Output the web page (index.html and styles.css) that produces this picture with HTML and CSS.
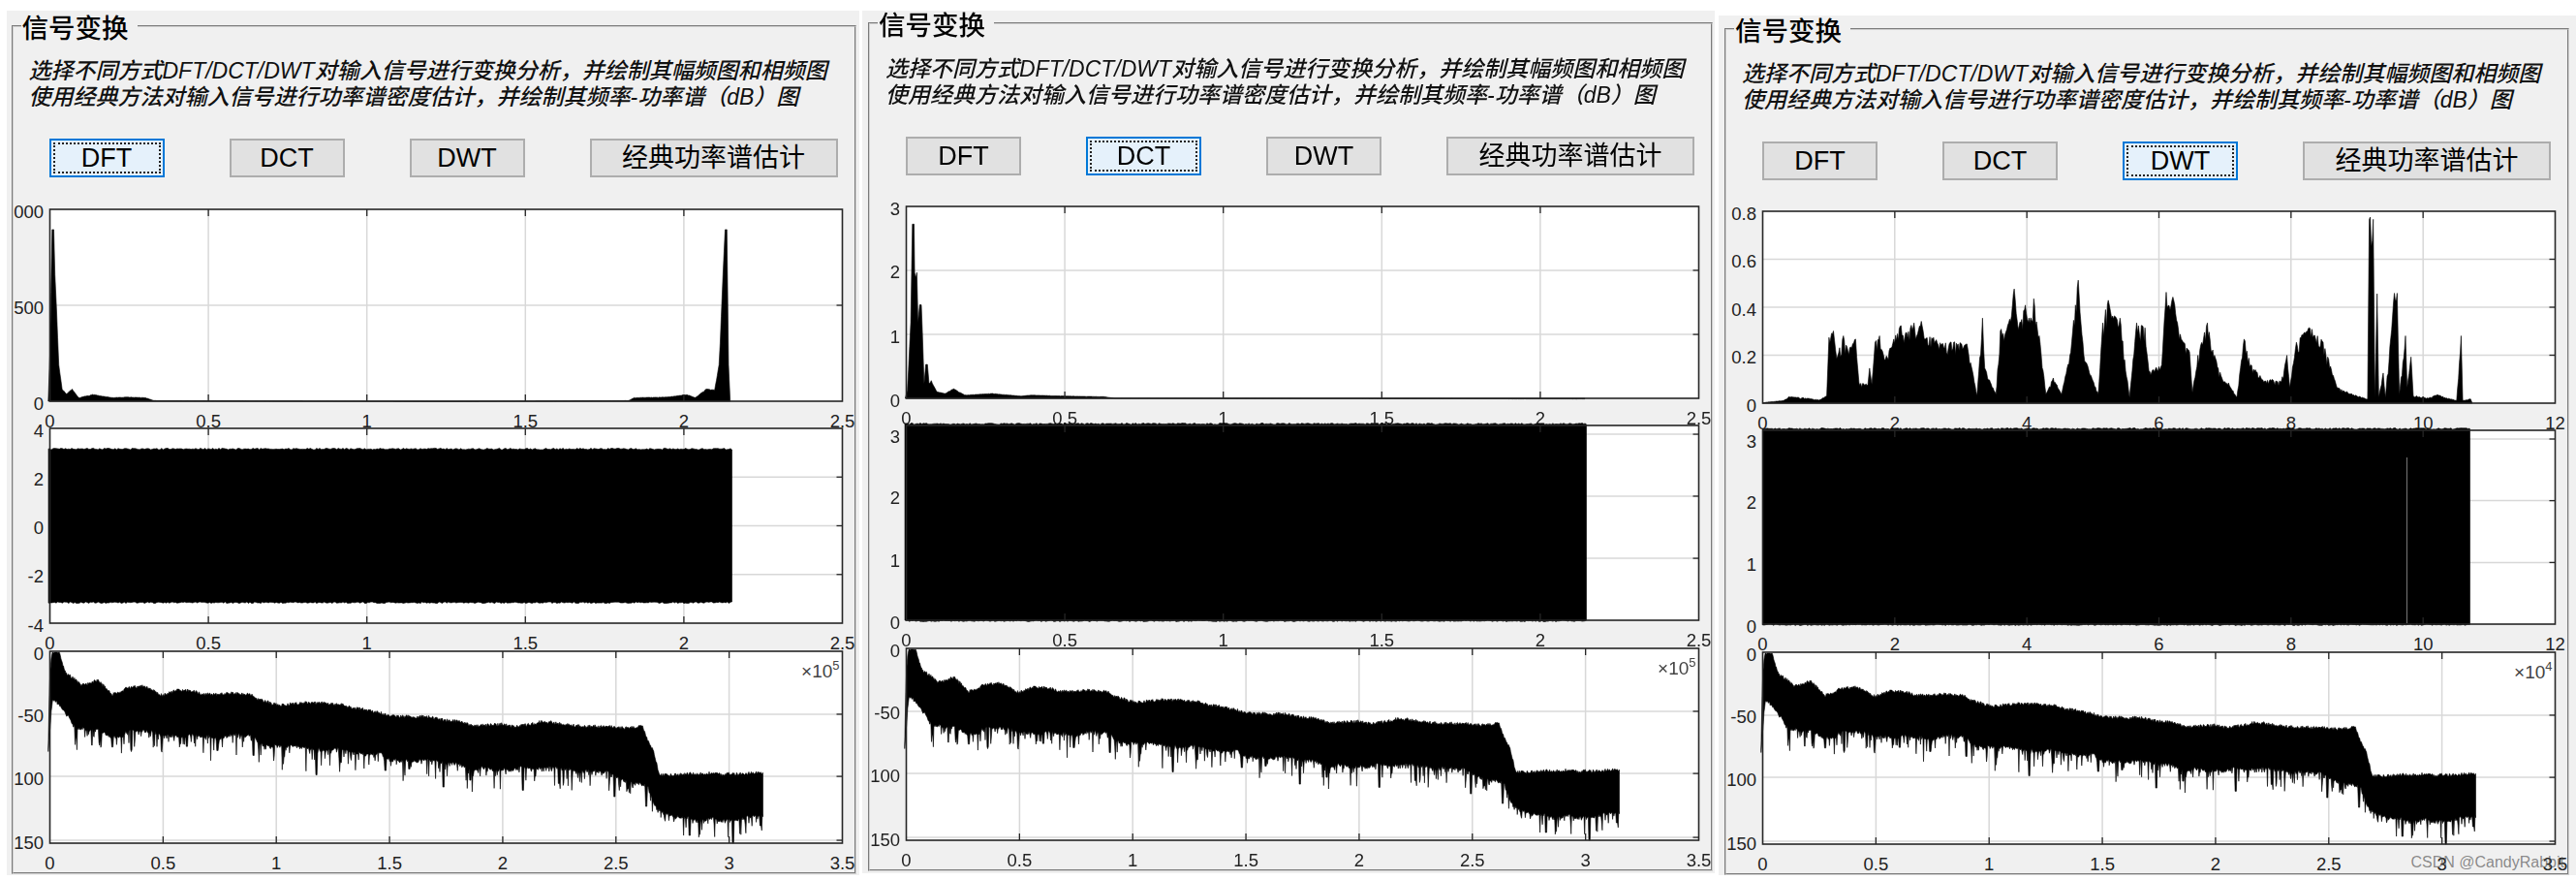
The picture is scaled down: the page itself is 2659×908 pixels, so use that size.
FILE: index.html
```html
<!DOCTYPE html>
<html lang="zh-CN">
<head>
<meta charset="utf-8">
<title>信号变换</title>
<link rel="stylesheet" href="styles.css">
</head>
<body>
<main class="sheet">
  <section class="panel panel-dft">
    <fieldset class="group">
      <legend class="group-title">信号变换</legend>
      <p class="intro">选择不同方式DFT/DCT/DWT对输入信号进行变换分析，并绘制其幅频图和相频图<br>使用经典方法对输入信号进行功率谱密度估计，并绘制其频率-功率谱（dB）图</p>
      <div class="actions">
        <button class="btn is-focus">DFT</button>
        <button class="btn">DCT</button>
        <button class="btn">DWT</button>
        <button class="btn btn-wide">经典功率谱估计</button>
      </div>
      <div class="plots" data-set="dft"></div>
    </fieldset>
  </section>
  <section class="panel panel-dct">
    <fieldset class="group">
      <legend class="group-title">信号变换</legend>
      <p class="intro">选择不同方式DFT/DCT/DWT对输入信号进行变换分析，并绘制其幅频图和相频图<br>使用经典方法对输入信号进行功率谱密度估计，并绘制其频率-功率谱（dB）图</p>
      <div class="actions">
        <button class="btn">DFT</button>
        <button class="btn is-focus">DCT</button>
        <button class="btn">DWT</button>
        <button class="btn btn-wide">经典功率谱估计</button>
      </div>
      <div class="plots" data-set="dct"></div>
    </fieldset>
  </section>
  <section class="panel panel-dwt">
    <fieldset class="group">
      <legend class="group-title">信号变换</legend>
      <p class="intro">选择不同方式DFT/DCT/DWT对输入信号进行变换分析，并绘制其幅频图和相频图<br>使用经典方法对输入信号进行功率谱密度估计，并绘制其频率-功率谱（dB）图</p>
      <div class="actions">
        <button class="btn">DFT</button>
        <button class="btn">DCT</button>
        <button class="btn is-focus">DWT</button>
        <button class="btn btn-wide">经典功率谱估计</button>
      </div>
      <div class="plots" data-set="dwt"></div>
    </fieldset>
    <span class="watermark">CSDN @CandyRabbit</span>
  </section>
</main>
<script src="script.js"></script>
</body>
</html>
```
FILE: styles.css
```css
* { box-sizing: border-box; }
html, body { margin: 0; padding: 0; background: #fff; }
body {
  width: 2659px;
  height: 908px;
  overflow: hidden;
  font-family: "Liberation Sans", "Noto Sans CJK SC", sans-serif;
  color: #111;
}
.sheet {
  display: flex;
  align-items: flex-start;
  padding-left: 7px;
  gap: 3px;
  filter: blur(0.4px);
}

.panel {
  position: relative;
  display: flex;
  flex-direction: column;
  width: 880px;
  padding-bottom: 3px;
  background: #f0f0f0;
}
.panel-dft { margin-top: 11px; height: 892px; padding-left: 4.5px; }
.panel-dct { margin-top: 11px; height: 890px; padding-left: 6px; }
.panel-dwt { margin-top: 16px; height: 887px; width: 885px; padding-left: 6px; margin-left: 1px; }

.group {
  flex: 1;
  width: 872px;
  min-width: 0;
  margin: -3px 0 0;
  padding: 0;
  border: 2px groove #cfcfcf;
}
.panel-dct .group { margin-top: -6px; }
.panel-dwt .group { margin-top: -5px; }

.group-title {
  height: 38px;
  margin-left: 8px;
  padding: 6px 9px 0 1px;
  font-size: 27.5px;
  font-weight: 500;
  line-height: 32px;
  color: #000;
}

.intro {
  margin: 13.5px 0 0 16px;
  font-size: 23px;
  font-weight: 500;
  line-height: 27px;
  font-style: italic;
  white-space: nowrap;
  color: #111;
}
.panel-dct .intro { margin-top: 14.5px; }

.actions { display: flex; gap: 67px; margin: 29.5px 0 0 37px; }
.btn {
  width: 119px;
  height: 40px;
  padding: 0;
  background: #e1e1e1;
  border: 2px solid #adadad;
  border-radius: 0;
  font: 400 27px/1 "Liberation Sans", "Noto Sans CJK SC", sans-serif;
  color: #000;
}
.btn-wide { width: 256px; }
.btn.is-focus {
  background: #e5f1fb;
  border-color: #0078d7;
  outline: 2px dotted #222;
  outline-offset: -6px;
}

.plots { margin-top: 32px; }
.panel-dft .plots { margin-top: 33px; }
.plot { display: block; overflow: visible; }
.plot-area { fill: #fff; }
.plot-grid { stroke: #d8d8d8; stroke-width: 1.5; fill: none; }
.plot-frame { stroke: #262626; stroke-width: 1.6; fill: none; }
.plot-tick { stroke: #262626; stroke-width: 1.3; }
.plot-data { fill: #000; stroke: #000; stroke-width: 0.6; }
.plot-seam { stroke: #777; stroke-width: 1; }
.plot-label { font: 18.5px "Liberation Sans", sans-serif; fill: #222; }
.plot-scale { font: 19px "Liberation Sans", sans-serif; fill: #444; }
.plot-exp { font-size: 13px; }

.watermark {
  position: absolute;
  right: 12px;
  bottom: 4px;
  font-size: 16px;
  line-height: 18px;
  color: rgba(70, 70, 70, 0.62);
  white-space: nowrap;
}
```
FILE: script.js
```js
(function () {
  var NS = 'http://www.w3.org/2000/svg';
  var AX_LEFT = 37.5;
  var AX_W = 818;

  function rng(seed) {
    return function () {
      seed |= 0; seed = seed + 0x6D2B79F5 | 0;
      var t = Math.imul(seed ^ seed >>> 15, 1 | seed);
      t = t + Math.imul(t ^ t >>> 7, 61 | t) ^ t;
      return ((t ^ t >>> 14) >>> 0) / 4294967296;
    };
  }
  function el(name, attrs, parent) {
    var n = document.createElementNS(NS, name);
    for (var k in attrs) n.setAttribute(k, attrs[k]);
    if (parent) parent.appendChild(n);
    return n;
  }
  function interp(pts, x) {
    if (x <= pts[0]) return pts[1];
    for (var i = 2; i < pts.length; i += 2) {
      if (x <= pts[i]) {
        var t = (x - pts[i - 2]) / (pts[i] - pts[i - 2] || 1);
        return pts[i - 1] + t * (pts[i + 1] - pts[i - 1]);
      }
    }
    return pts[pts.length - 1];
  }

  /* traced outlines, in reference crop units */
  var DFT = [85,1243,88,1100,92,710,95,710,97,850,100,960,104,1130,110,1205,118,1220,128,1205,140,1232,165,1222,200,1232,228,1230,260,1232,275,1241,800,1244,1130,1241,1140,1232,1200,1230,1235,1222,1250,1232,1270,1205,1285,1208,1293,1130,1297,980,1300,850,1304,710,1307,710,1310,1130,1313,1243];
  var DCT = [93,1235,97,1210,103,1000,106,695,109,695,110,845,114,845,116,1000,119,945,122,945,124,1030,127,1190,130,1130,133,1130,136,1190,140,1180,150,1215,165,1220,180,1205,200,1225,250,1220,300,1228,320,1225,380,1228,450,1230,470,1235,1315,1237];
  var DWT = [103,1248,110,1245,140,1240,150,1228,180,1232,205,1238,218,1225,222,1045,230,1025,236,1110,248,1040,256,1085,270,1050,276,1185,292,1190,295,1140,299,1190,305,1060,313,1040,322,1115,350,1010,360,1030,375,1000,378,1050,388,995,395,1050,410,1045,425,1065,440,1060,470,1065,480,1150,488,1225,498,985,502,1140,522,1220,530,1025,545,1000,555,895,562,1020,575,945,583,1000,590,925,600,1040,612,1220,625,1170,640,1220,655,1100,670,868,680,1100,706,1220,714,1000,724,930,730,985,745,985,762,1230,775,1000,790,1015,797,1150,820,1130,828,905,835,960,840,920,855,1050,870,1090,875,1215,885,1100,902,1000,915,1100,930,1180,940,1185,955,1230,968,1050,980,1130,1005,1180,1015,1175,1035,1180,1045,1100,1050,1200,1062,1060,1085,1015,1110,1060,1135,1200,1170,1225,1190,1235,1193,680,1200,680,1203,1230,1207,910,1210,1230,1218,1155,1222,1230,1238,908,1243,908,1247,1220,1258,1040,1261,1200,1268,1105,1272,1225,1300,1232,1315,1222,1340,1235,1350,1240,1358,1040,1361,1240,1375,1235,1378,1248];
  var PSD_TOP = [85,1000,88,760,92,700,105,700,115,760,130,780,145,800,175,785,200,830,230,810,255,805,290,835,320,815,370,830,395,825,445,825,470,845,500,860,580,855,660,875,700,895,775,900,860,925,900,920,930,930,970,915,1030,925,1155,930,1165,975,1175,1000,1185,1075,1370,1075];
  var PSD_BOT = [85,1000,92,850,105,860,120,895,135,935,165,930,200,960,240,945,280,955,330,960,400,955,450,940,470,975,560,995,680,1005,700,1030,790,1030,850,1055,950,1055,1090,1060,1130,1085,1165,1115,1180,1175,1250,1215,1370,1210];
  var PSD_SPIKES = [[135,965],[200,992],[235,1000],[290,985],[335,990],[390,1003],[455,1018],[510,1022],[568,1078],[612,1040],[692,1065],[735,1060],[797,1116],[845,1095],[940,1126],[1005,1105],[1105,1146],[1128,1122],[1162,1176],[1240,1266],[1258,1262],[1318,1292],[1368,1236]];

  function outline(g, pts, box, w, h, seed, amp) {
    var r = rng(seed), d = '';
    var bx0 = box[0], bx1 = box[1], by0 = box[2], by1 = box[3];
    var toX = function (x) { return (x - bx0) / (bx1 - bx0) * w; };
    var toY = function (y) { return (y - by0) / (by1 - by0) * h; };
    for (var i = 0; i < pts.length; i += 2) {
      d += (i ? 'L' : 'M') + toX(pts[i]).toFixed(1) + ' ' + toY(pts[i + 1]).toFixed(1);
      if (i + 2 < pts.length) {
        var x0 = toX(pts[i]), x1 = toX(pts[i + 2]);
        var n = Math.floor((x1 - x0) / 0.9);
        for (var k = 1; k < n; k++) {
          var t = k / n;
          var yy = toY(pts[i + 1]) + t * (toY(pts[i + 3]) - toY(pts[i + 1]));
          yy += (r() * r()) * amp * (h - yy) * 2.2 - r() * amp * 0.25 * (h - yy);
          d += 'L' + (x0 + t * (x1 - x0)).toFixed(1) + ' ' + yy.toFixed(1);
        }
      }
    }
    el('path', { 'class': 'plot-data', d: d + 'L' + toX(pts[pts.length - 2]).toFixed(1) + ' ' + h + 'L' + toX(pts[0]).toFixed(1) + ' ' + h + 'Z' }, g);
  }

  function band(g, w, h, opts) {
    var r = rng(opts.seed), top = '', bot = [];
    for (var x = opts.x0; x <= opts.x1; x += 1.6) {
      top += (top ? 'L' : 'M') + x.toFixed(1) + ' ' + (opts.top - r() * opts.jag).toFixed(1);
      bot.push(x.toFixed(1) + ' ' + (opts.bottom + r() * opts.jag).toFixed(1));
    }
    top += 'L' + opts.x1 + ' ' + opts.top + 'L' + opts.x1 + ' ' + opts.bottom;
    el('path', { 'class': 'plot-data', d: top + 'L' + bot.reverse().join('L') + 'Z' }, g);
  }

  function psd(g, w, h) {
    var r = rng(77), top = [], bot = [], wander = 0;
    var fx = function (dx) { return (dx - 88) / 1427 * w; };
    var fy = function (dy) { return (dy - 695) / 595 * h; };
    for (var dx = 85; dx <= 1372; dx += 1.1) {
      var early = dx < 130;
      wander = wander * 0.96 + (r() - 0.5) * 1.6;
      var t = fy(interp(PSD_TOP, dx)) + (r() - 0.5) * 3.2 + wander * 0.35;
      var b = fy(interp(PSD_BOT, dx)) + r() * 3 + wander;
      if (!early && r() > 0.72) b += r() * r() * 26;
      PSD_SPIKES.forEach(function (s) {
        if (Math.abs(dx - s[0]) < 1.6) b = Math.max(b, fy(s[1]));
      });
      top.push(fx(dx).toFixed(1) + ' ' + Math.max(t, 1).toFixed(1));
      bot.push(fx(dx).toFixed(1) + ' ' + Math.min(b, h).toFixed(1));
    }
    el('path', { 'class': 'plot-data', d: 'M' + top.join('L') + 'L' + bot.reverse().join('L') + 'Z' }, g);
  }

  var X_25 = ['0', '0.5', '1', '1.5', '2', '2.5'];
  var X_35 = ['0', '0.5', '1', '1.5', '2', '2.5', '3', '3.5'];
  var X_12 = ['0', '2', '4', '6', '8', '10', '12'];
  var Y_PHASE = [['3', 0.045], ['2', 0.363], ['1', 0.682], ['0', 1]];
  var Y_PSD = [['0', 0], ['-50', 0.328], ['100', 0.652], ['150', 0.985]];

  var SETS = {
    dft: [
      { h: 198, step: 226, x: X_25, y: [['000', 0], ['500', 0.5], ['0', 1]], draw: function (g, w, h) { outline(g, DFT, [88, 1515, 647, 1243], w, h, 3, 0.05); } },
      { h: 201, step: 230, x: X_25, y: [['4', 0], ['2', 0.25], ['0', 0.5], ['-2', 0.75], ['-4', 1]], draw: function (g, w, h) { band(g, w, h, { seed: 5, x0: -1.5, x1: 704, top: 22, bottom: 179, jag: 1.6 }); } },
      { h: 198, step: 228, x: X_35, y: Y_PSD, scale: '5', draw: psd }
    ],
    dct: [
      { h: 198, step: 226, x: X_25, y: [['3', 0], ['2', 0.333], ['1', 0.667], ['0', 1]], draw: function (g, w, h) { outline(g, DCT, [95, 1520, 640, 1235], w, h, 9, 0.05); } },
      { h: 201, step: 230, x: X_25, y: Y_PHASE, draw: function (g, w, h) { band(g, w, h, { seed: 6, x0: -1.5, x1: 702, top: -1, bottom: 201, jag: 1.4 }); } },
      { h: 198, step: 228, x: X_35, y: Y_PSD, scale: '5', draw: psd }
    ],
    dwt: [
      { h: 198, step: 226, x: X_12, y: [['0.8', 0], ['0.6', 0.25], ['0.4', 0.5], ['0.2', 0.75], ['0', 1]], draw: function (g, w, h) { outline(g, DWT, [103, 1527, 655, 1248], w, h, 13, 0.12); } },
      { h: 200, step: 229, x: X_12, y: Y_PHASE, draw: function (g, w, h) {
          band(g, w, h, { seed: 8, x0: 0, x1: 730, top: -1, bottom: 200, jag: 1.4 });
          el('line', { 'class': 'plot-seam', x1: 665, x2: 665, y1: 28, y2: 199 }, g);
        } },
      { h: 198, step: 228, x: X_35, y: Y_PSD, scale: '4', draw: psd }
    ]
  };

  function buildPlot(host, cfg) {
    var w = AX_W, h = cfg.h;
    var svg = el('svg', { 'class': 'plot', width: 860, height: cfg.step }, host);
    var g = el('g', { transform: 'translate(' + AX_LEFT + ' 0)' }, svg);
    var nx = cfg.x.length - 1;

    el('rect', { 'class': 'plot-area', x: 0, y: 0, width: w, height: h }, g);
    cfg.x.forEach(function (_, i) {
      if (i === 0 || i === nx) return;
      var x = (i / nx * w).toFixed(1);
      el('line', { 'class': 'plot-grid', x1: x, x2: x, y1: 0, y2: h }, g);
    });
    cfg.y.forEach(function (row) {
      if (row[1] === 0 || row[1] === 1) return;
      var y = (row[1] * h).toFixed(1);
      el('line', { 'class': 'plot-grid', x1: 0, x2: w, y1: y, y2: y }, g);
    });

    cfg.draw(g, w, h);

    el('rect', { 'class': 'plot-frame', x: 0, y: 0, width: w, height: h }, g);
    cfg.x.forEach(function (label, i) {
      var x = i / nx * w;
      if (i > 0 && i < nx) {
        el('line', { 'class': 'plot-tick', x1: x, x2: x, y1: 0, y2: 7 }, g);
        el('line', { 'class': 'plot-tick', x1: x, x2: x, y1: h, y2: h - 7 }, g);
      }
      el('text', { 'class': 'plot-label', x: x, y: h + 26.5, 'text-anchor': 'middle' }, g).textContent = label;
    });
    cfg.y.forEach(function (row) {
      var y = row[1] * h;
      if (row[1] > 0 && row[1] < 1) {
        el('line', { 'class': 'plot-tick', x1: w, x2: w - 6, y1: y, y2: y }, g);
      }
      el('text', { 'class': 'plot-label', x: -6.5, y: y + 8.5, 'text-anchor': 'end' }, g).textContent = row[0];
    });
    if (cfg.scale) {
      var t = el('text', { 'class': 'plot-scale', x: w - 3, y: 27, 'text-anchor': 'end' }, g);
      t.appendChild(document.createTextNode('×10'));
      el('tspan', { 'class': 'plot-exp', dy: -8 }, t).textContent = cfg.scale;
    }
  }

  document.querySelectorAll('.plots').forEach(function (host) {
    SETS[host.dataset.set].forEach(function (cfg) { buildPlot(host, cfg); });
  });
})();
```
